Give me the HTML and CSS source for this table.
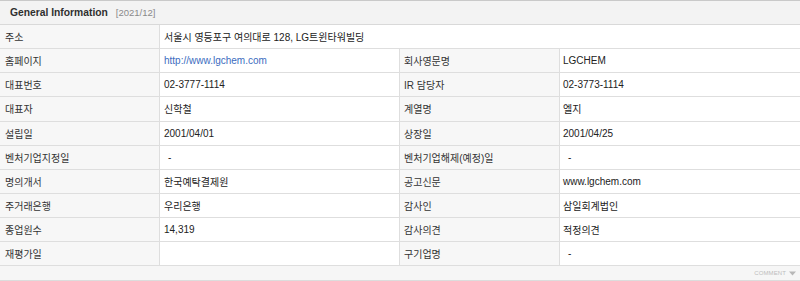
FILE: index.html
```html
<!DOCTYPE html>
<html lang="ko">
<head>
<meta charset="utf-8">
<title>General Information</title>
<link rel="stylesheet" href="styles.css">
</head>
<body>
<div class="panel">
  <div class="panel-head">
    <span class="panel-title">General Information</span>
    <span class="panel-date">[2021/12]</span>
  </div>
  <div class="info">
    <div class="row">
      <div class="cell label">주소</div>
      <div class="cell value wide">서울시 영등포구 여의대로 128, LG트윈타워빌딩</div>
    </div>
    <div class="row">
      <div class="cell label">홈페이지</div>
      <div class="cell value"><a class="link" href="#">http://www.lgchem.com</a></div>
      <div class="cell label">회사영문명</div>
      <div class="cell value last">LGCHEM</div>
    </div>
    <div class="row">
      <div class="cell label">대표번호</div>
      <div class="cell value">02-3777-1114</div>
      <div class="cell label">IR 담당자</div>
      <div class="cell value last">02-3773-1114</div>
    </div>
    <div class="row">
      <div class="cell label">대표자</div>
      <div class="cell value">신학철</div>
      <div class="cell label">계열명</div>
      <div class="cell value last">엘지</div>
    </div>
    <div class="row">
      <div class="cell label">설립일</div>
      <div class="cell value">2001/04/01</div>
      <div class="cell label">상장일</div>
      <div class="cell value last">2001/04/25</div>
    </div>
    <div class="row">
      <div class="cell label">벤처기업지정일</div>
      <div class="cell value dash">-</div>
      <div class="cell label">벤처기업해제(예정)일</div>
      <div class="cell value last dash">-</div>
    </div>
    <div class="row">
      <div class="cell label">명의개서</div>
      <div class="cell value">한국예탁결제원</div>
      <div class="cell label">공고신문</div>
      <div class="cell value last">www.lgchem.com</div>
    </div>
    <div class="row">
      <div class="cell label">주거래은행</div>
      <div class="cell value">우리은행</div>
      <div class="cell label">감사인</div>
      <div class="cell value last">삼일회계법인</div>
    </div>
    <div class="row">
      <div class="cell label">종업원수</div>
      <div class="cell value">14,319</div>
      <div class="cell label">감사의견</div>
      <div class="cell value last">적정의견</div>
    </div>
    <div class="row">
      <div class="cell label">재평가일</div>
      <div class="cell value"></div>
      <div class="cell label">구기업명</div>
      <div class="cell value last dash">-</div>
    </div>
  </div>
  <div class="comment-bar">
    <span class="comment-text">COMMENT</span>
    <svg class="comment-arrow" width="7" height="5" viewBox="0 0 7 5"><path d="M0 0.5 L7 0.5 L3.5 4.5 Z" fill="#b8b8b8"/></svg>
  </div>
</div>
</body>
</html>
```
FILE: styles.css
```css
html, body {
  margin: 0;
  padding: 0;
  background: #ffffff;
}

body {
  font-family: "Liberation Sans", "Noto Sans CJK KR", sans-serif;
  font-size: 10px;
  color: #333333;
}

.panel {
  width: 800px;
}

.panel-head {
  height: 23px;
  border-top: 1px solid #c9c9c9;
  border-bottom: 1px solid #d9d9d9;
  background: #f3f3f3;
  display: flex;
  align-items: center;
  padding-left: 10px;
  gap: 8px;
}

.panel-title {
  font-weight: bold;
  font-size: 10.3px;
  color: #2f2f2f;
}

.panel-date {
  font-size: 9.5px;
  color: #8a8a8a;
}

.info {
  display: flex;
  flex-direction: column;
}

.row {
  display: grid;
  grid-template-columns: 160px 240px 160px 240px;
  height: 24.15px;
  box-sizing: border-box;
  border-bottom: 1px solid #dedede;
}

.cell {
  display: flex;
  align-items: center;
  box-sizing: border-box;
  white-space: nowrap;
}

.label {
  background: #f7f7f7;
  border-right: 1px solid #dedede;
  padding-left: 5px;
  color: #333333;
}

.value {
  background: #ffffff;
  border-right: 1px solid #dedede;
  padding-left: 4px;
  color: #222222;
}

.value.last {
  border-right: none;
  padding-left: 3px;
}

.value.wide {
  grid-column: 2 / 5;
  border-right: none;
}

.label:nth-child(3) {
  padding-left: 4px;
}

.dash {
  padding-left: 8px;
}

.value.last.dash {
  padding-left: 8px;
}

.link {
  color: #3c6cc0;
  text-decoration: none;
}

.comment-bar {
  height: 14px;
  background: #f6f6f6;
  border-bottom: 1px solid #dcdcdc;
  display: flex;
  justify-content: flex-end;
  align-items: center;
  gap: 3px;
  padding-right: 4px;
}

.comment-text {
  font-size: 6px;
  color: #bdbdbd;
  letter-spacing: 0.1px;
}

.comment-arrow {
  display: block;
}
```
